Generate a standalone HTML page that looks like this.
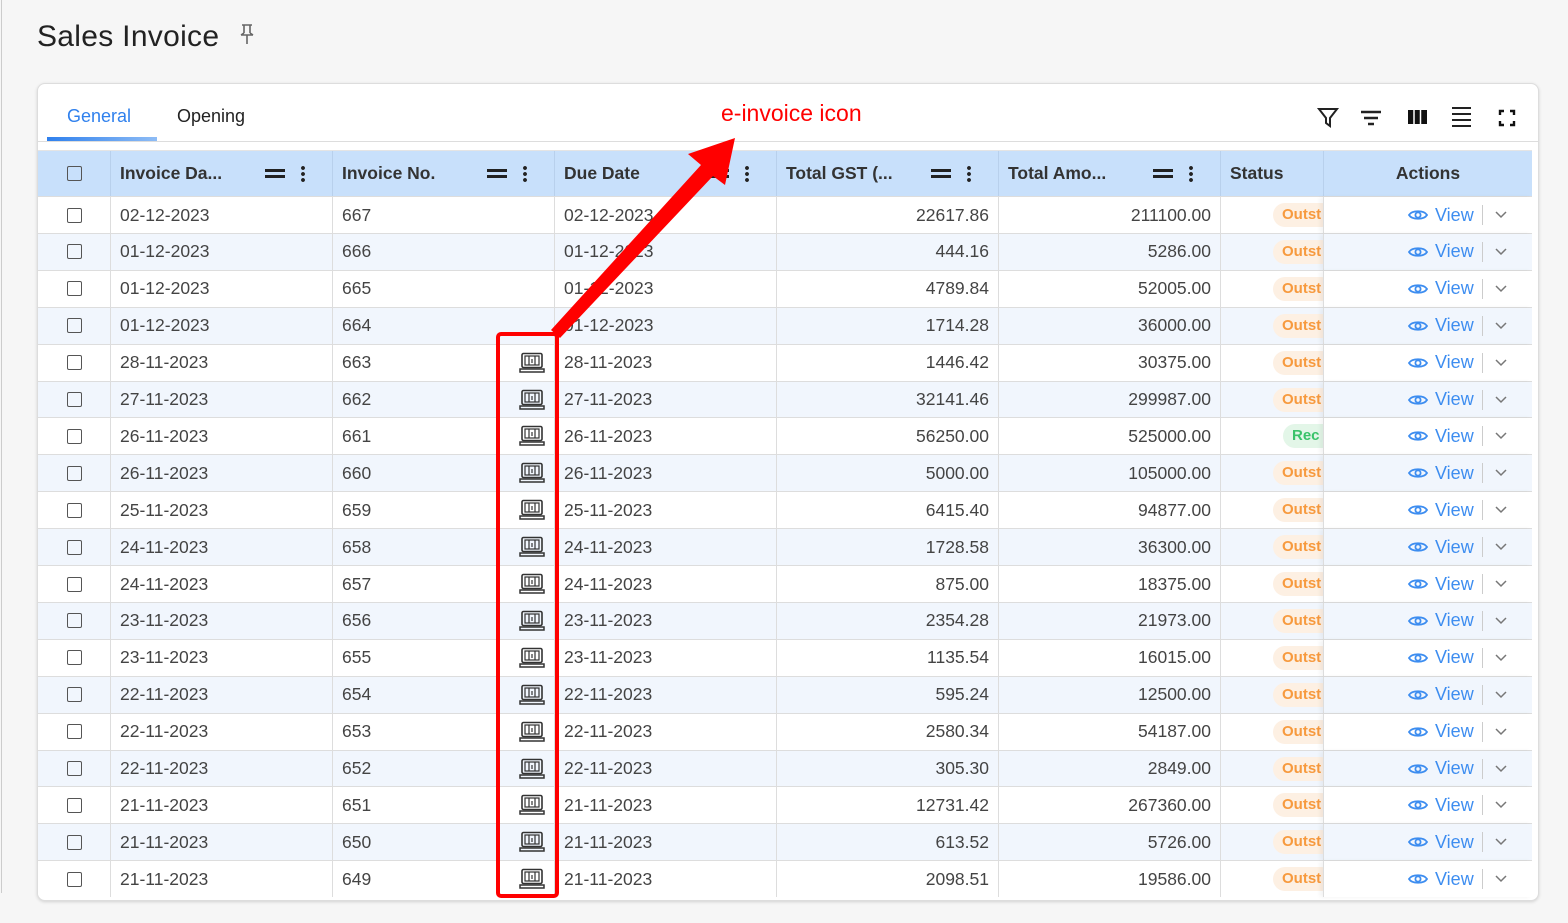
<!DOCTYPE html>
<html><head><meta charset="utf-8"><style>
*{box-sizing:border-box;margin:0;padding:0}
body{width:1568px;height:923px;background:#f6f6f6;font-family:"Liberation Sans",sans-serif;position:relative;overflow:hidden;color:#444}
.lline{position:absolute;left:1px;top:0;width:1px;height:893px;background:#ccc}
h1{position:absolute;left:37px;top:20px;font-size:30px;font-weight:400;color:#222;letter-spacing:.3px}
.card{position:absolute;left:37px;top:83px;width:1502px;height:818px;background:#fff;border:1px solid #ddd;border-radius:8px;box-shadow:0 1px 3px rgba(0,0,0,.15);overflow:hidden}
.tab{position:absolute;top:22px;font-size:18px}
.hdr{position:absolute;left:0;top:66px;width:1494px;height:46px;background:#c8e0fb;border-top:1px solid #e4e4e4}
.row{position:absolute;left:0;width:1494px;height:37px;border-top:1px solid #ddd;font-size:17.5px;color:#444}
.c{position:absolute;top:0;height:100%;border-left:1px solid #ddd;padding:0 9px;display:flex;align-items:center}
.hdr .c{border-left:1px solid #b8d0ec;font-weight:bold;font-size:17.5px;color:#333}
.r{justify-content:flex-end}
.cb{width:15px;height:15px;border:1.5px solid #555;border-radius:2px}
.eq{position:absolute;top:18px;width:20px;height:9px;border-top:3px solid #222;border-bottom:3px solid #222}
.dots{position:absolute;top:14px;width:4px;height:18px;background:radial-gradient(circle,#222 1.8px,transparent 2px) 0 0/4px 6px repeat-y}
.badge{position:absolute;left:52px;top:6px;height:24px;width:60px;border-radius:12px;background:#fdf0e3;color:#f79a3e;font-weight:bold;font-size:15px;padding:3px 0 0 9px}
.badge.g{background:#e3f6e8;color:#3ac36a;left:62px}
.view{position:absolute;left:84px;top:0;height:100%;display:flex;align-items:center;color:#3d8df0;font-size:18px}
</style></head><body>
<div class="lline"></div>
<h1>Sales Invoice <svg width="18" height="24" viewBox="0 0 18 24" style="margin-left:10px;vertical-align:-1px"><path d="M4 2h10M6 2v8M12 2v8M3 12h12M6 10l-3 2M12 10l3 2M9 12v9" stroke="#666" stroke-width="1.6" fill="none"/></svg></h1>
<div class="card">
<div class="tab" style="left:29px;color:#2f80ed">General</div>
<div style="position:absolute;left:9px;top:53px;width:110px;height:4px;background:linear-gradient(90deg,#2f80ed,#8ebcf5)"></div>
<div class="tab" style="left:139px;color:#222">Opening</div>
<div style="position:absolute;left:0;top:57px;width:100%;height:1px;background:#ddd"></div>
<svg style="position:absolute;left:1278px;top:20px" width="200" height="28" viewBox="0 0 200 28">
<path d="M3 5h18l-7 9v8l-4-3v-5z" fill="none" stroke="#222" stroke-width="2"/>
<path d="M45 8h20M48 14h14M52 20h6" stroke="#222" stroke-width="2.4"/>
<rect x="92" y="6" width="19" height="14" fill="#111"/><path d="M98 6v14M104.5 6v14" stroke="#fff" stroke-width="1.5"/>
<path d="M136 4h19M136 10h19M136 16h19M136 22h19" stroke="#222" stroke-width="2"/>
<path d="M184 11v-4h4M194 7h4v4M198 17v4h-4M188 21h-4v-4" fill="none" stroke="#111" stroke-width="2.4"/>
</svg>
<div class="hdr">
<div class="c" style="left:0;width:72px;border:none;justify-content:center"><div class="cb"></div></div>
<div class="c" style="left:72px;width:222px">Invoice Da...<span class="eq" style="left:154px"></span><span class="dots" style="left:190px"></span></div>
<div class="c" style="left:294px;width:222px">Invoice No.<span class="eq" style="left:154px"></span><span class="dots" style="left:190px"></span></div>
<div class="c" style="left:516px;width:222px">Due Date<span class="eq" style="left:154px"></span><span class="dots" style="left:190px"></span></div>
<div class="c" style="left:738px;width:222px">Total GST (...<span class="eq" style="left:154px"></span><span class="dots" style="left:190px"></span></div>
<div class="c" style="left:960px;width:222px">Total Amo...<span class="eq" style="left:154px"></span><span class="dots" style="left:190px"></span></div>
<div class="c" style="left:1182px;width:103px">Status</div>
<div class="c" style="left:1285px;width:209px;justify-content:center">Actions</div>
</div>
<div id="rows"></div>
</div>
<svg style="position:absolute;left:0;top:0" width="1568" height="923">
<text x="721" y="121" fill="#f00" font-family="Liberation Sans" font-size="23">e-invoice icon</text>
<polygon points="551,330 701,165 688,154 735,138 725,185 713,176 560,338" fill="#f00"/>
<rect x="498" y="334" width="59" height="562" rx="3" fill="none" stroke="#f00" stroke-width="4"/>
</svg>
<script>
var d=[["02-12-2023",667,"22617.86","211100.00"],["01-12-2023",666,"444.16","5286.00"],["01-12-2023",665,"4789.84","52005.00"],["01-12-2023",664,"1714.28","36000.00"],["28-11-2023",663,"1446.42","30375.00"],["27-11-2023",662,"32141.46","299987.00"],["26-11-2023",661,"56250.00","525000.00"],["26-11-2023",660,"5000.00","105000.00"],["25-11-2023",659,"6415.40","94877.00"],["24-11-2023",658,"1728.58","36300.00"],["24-11-2023",657,"875.00","18375.00"],["23-11-2023",656,"2354.28","21973.00"],["23-11-2023",655,"1135.54","16015.00"],["22-11-2023",654,"595.24","12500.00"],["22-11-2023",653,"2580.34","54187.00"],["22-11-2023",652,"305.30","2849.00"],["21-11-2023",651,"12731.42","267360.00"],["21-11-2023",650,"613.52","5726.00"],["21-11-2023",649,"2098.51","19586.00"]];
var ic='<svg width="26" height="22" viewBox="0 0 26 22"><rect x="3" y="1.5" width="20" height="14" rx="1.5" fill="none" stroke="#333" stroke-width="1.6"/><rect x="6" y="4" width="14" height="9" fill="none" stroke="#333" stroke-width="1.2"/><path d="M10 4v9M16 4v9M13 7v4" stroke="#333" stroke-width="1.2"/><path d="M1 17h24v3H1z" fill="none" stroke="#333" stroke-width="1.5"/></svg>';
var h='';
d.forEach(function(r,i){
var t=112+i*36.9;var bg=i%2?'#f1f6fd':'#fff';
h+='<div class="row" style="top:'+t+'px;background:'+bg+'">'+
'<div class="c" style="left:0;width:72px;border:none;justify-content:center"><div class="cb"></div></div>'+
'<div class="c" style="left:72px;width:222px">'+r[0]+'</div>'+
'<div class="c" style="left:294px;width:222px">'+r[1]+(i>=4?'<span style="position:absolute;left:186px;top:7px">'+ic+'</span>':'')+'</div>'+
'<div class="c" style="left:516px;width:222px">'+r[0]+'</div>'+
'<div class="c r" style="left:738px;width:222px">'+r[2]+'</div>'+
'<div class="c r" style="left:960px;width:222px">'+r[3]+'</div>'+
'<div class="c" style="left:1182px;width:103px;overflow:hidden">'+(i==6?'<span class="badge g">Rec</span>':'<span class="badge">Outst</span>')+'</div>'+
'<div class="c" style="left:1285px;width:209px;box-shadow:-3px 0 4px rgba(0,0,0,.05)"><span class="view"><svg width="20" height="14" viewBox="0 0 20 14" style="margin-right:7px"><path d="M1 7C4 2 16 2 19 7C16 12 4 12 1 7Z" fill="none" stroke="#3d8df0" stroke-width="1.8"/><circle cx="10" cy="7" r="2.6" fill="none" stroke="#3d8df0" stroke-width="1.8"/></svg>View<span style="display:inline-block;width:1px;height:20px;background:#ccc;margin:0 12px 0 8px"></span><svg width="12" height="8" viewBox="0 0 12 8"><path d="M1 1l5 5 5-5" fill="none" stroke="#777" stroke-width="1.5"/></svg></span></div>'+
'</div>';});
document.getElementById('rows').innerHTML=h;
</script>
</body></html>
